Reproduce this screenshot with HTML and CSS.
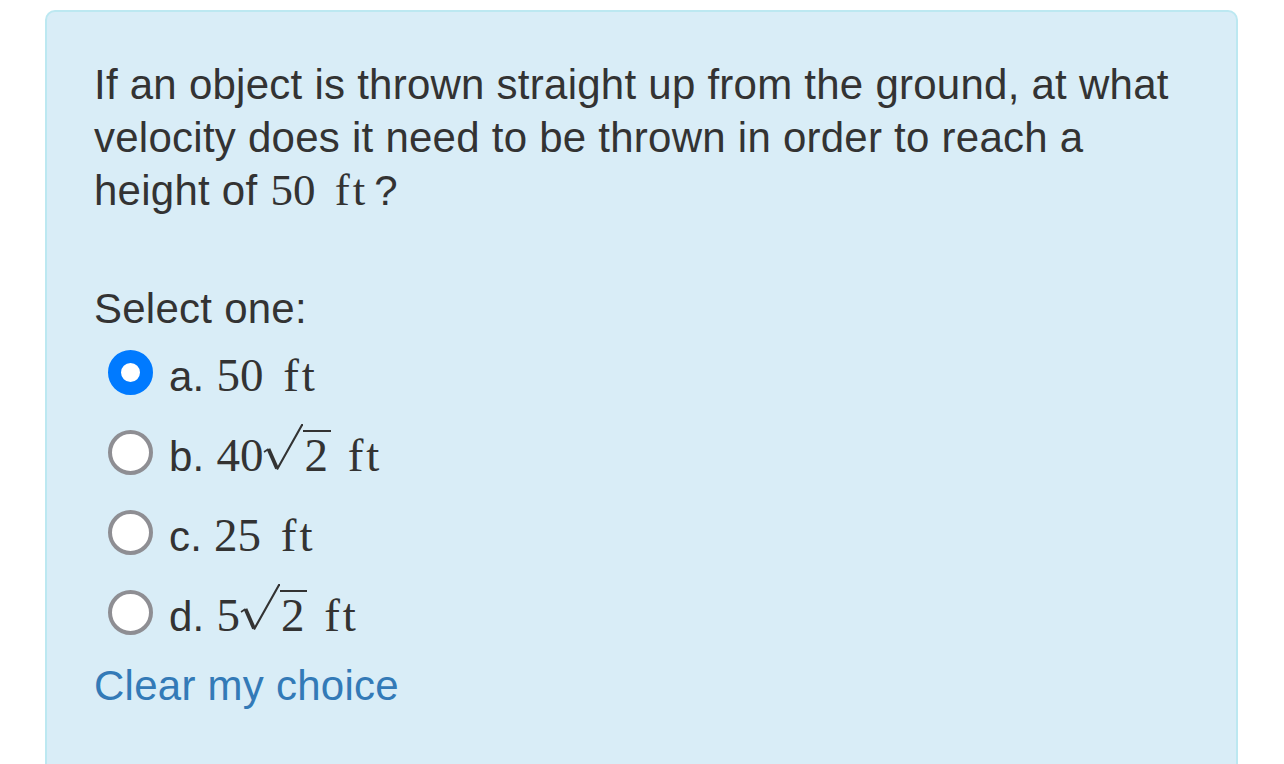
FILE: index.html
```html
<!DOCTYPE html>
<html lang="en">
<head>
    <meta charset="UTF-8">
    <meta name="viewport" content="width=device-width, initial-scale=1.0">
    <title>Question</title>
    <link rel="stylesheet" href="styles.css">
</head>
<body>
    <div class="que">
        <div class="qtext">
            <span>If an object is thrown straight up from the ground, at what velocity does it need to be thrown in order to reach a</span> <span>height of</span><span class="math q-math">50 <span class="unit">ft</span></span><span>?</span>
        </div>

        <div class="prompt">Select one:</div>

        <div class="answer">
            <label class="option">
                <input type="radio" name="q1" checked>
                <span class="option-text">a. <span class="math">50 <span class="unit">ft</span></span></span>
            </label>
            <label class="option">
                <input type="radio" name="q1">
                <span class="option-text">b. <span class="math">40<span class="sqrt"><svg class="rad" width="40" height="47" viewBox="0 0 40 47"><path d="M1 28 L5.5 25" stroke="#333" stroke-width="1.6" fill="none"/><path d="M5.5 25 L14 44.5" stroke="#333" stroke-width="3.8" fill="none"/><path d="M14 45.5 L39 1 L40 1" stroke="#333" stroke-width="2.1" fill="none"/></svg><span class="radicand">2</span></span> <span class="unit tight">ft</span></span></span>
            </label>
            <label class="option">
                <input type="radio" name="q1">
                <span class="option-text">c. <span class="math">25 <span class="unit">ft</span></span></span>
            </label>
            <label class="option">
                <input type="radio" name="q1">
                <span class="option-text">d. <span class="math">5<span class="sqrt"><svg class="rad" width="40" height="47" viewBox="0 0 40 47"><path d="M1 28 L5.5 25" stroke="#333" stroke-width="1.6" fill="none"/><path d="M5.5 25 L14 44.5" stroke="#333" stroke-width="3.8" fill="none"/><path d="M14 45.5 L39 1 L40 1" stroke="#333" stroke-width="2.1" fill="none"/></svg><span class="radicand">2</span></span> <span class="unit tight">ft</span></span></span>
            </label>
        </div>

        <a class="clear-link" href="#">Clear my choice</a>
    </div>
</body>
</html>
```

FILE: styles.css
```css
* {
    margin: 0;
    padding: 0;
    box-sizing: border-box;
}

body {
    font-family: 'Liberation Sans', Arial, Helvetica, sans-serif;
    font-size: 42px;
    line-height: 53px;
    letter-spacing: 0.25px;
    color: #333;
    background: #fff;
    overflow: hidden;
}

.que {
    margin: 10px 46px 0 45px;
    min-height: 820px;
    padding: 46px 47px;
    background: #d9edf7;
    border: 2px solid #bce8f1;
    border-radius: 10px;
}

.math {
    font-family: 'Liberation Serif', 'Times New Roman', serif;
    font-size: 47px;
    line-height: 1;
    letter-spacing: 0;
    color: #333;
}

.q-math {
    font-size: 45px;
    margin: 0 6px 0 13px;
}

.unit {
    margin-left: 8px;
    letter-spacing: 3px;
}

.unit.tight {
    margin-left: 5px;
}

.sqrt {
    display: inline-flex;
    align-items: baseline;
}

.rad {
    display: block;
    margin-bottom: -6px;
}

.radicand {
    display: block;
    line-height: 1;
    border-top: 2px solid #333;
    padding: 0 3px 0 1px;
}

.prompt {
    margin-top: 65px;
}

.answer {
    margin-top: 2px;
}

.option {
    display: flex;
    align-items: center;
    line-height: 80px;
    cursor: pointer;
}

.option input[type="radio"] {
    appearance: none;
    -webkit-appearance: none;
    width: 45px;
    height: 45px;
    margin: 0 16px 9px 14px;
    border-radius: 50%;
    border: 4px solid #8e8e93;
    background: #fff;
    flex-shrink: 0;
}

.option input[type="radio"]:checked {
    border: 13px solid #007aff;
}

.clear-link {
    display: inline-block;
    margin-top: 2px;
    color: #337ab7;
    text-decoration: none;
}
```
